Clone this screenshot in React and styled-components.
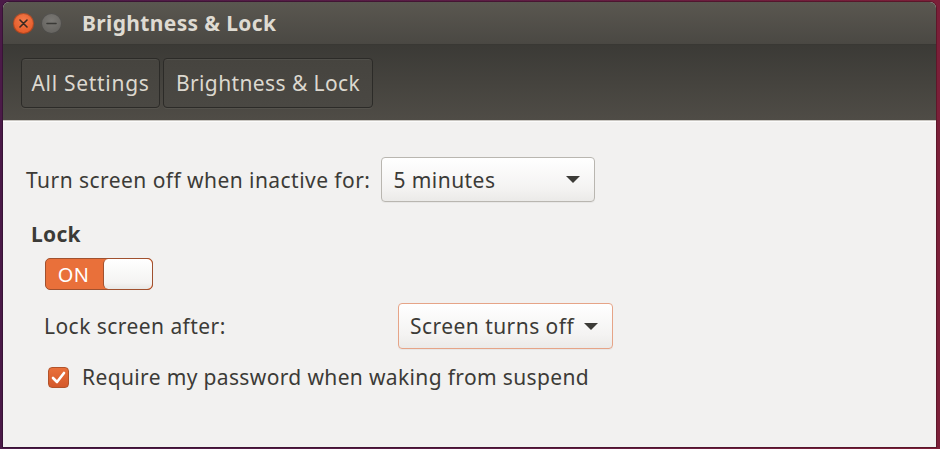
import React from "react";
import styled, { createGlobalStyle } from "styled-components";

const GlobalStyle = createGlobalStyle`
  html, body {
    margin: 0;
    padding: 0;
    width: 940px;
    height: 449px;
    overflow: hidden;
  }
  body {
    background: linear-gradient(90deg, #4b1a48 0%, #5c1d45 50%, #7c1f38 100%);
    font-family: "Noto Sans", "DejaVu Sans", sans-serif;
  }
`;

const Window = styled.div`
  margin: 2px 4px 0 3px;
  height: 445px;
  display: flex;
  flex-direction: column;
  border-radius: 6px 6px 0 0;
  overflow: hidden;
  background: #f2f1f0;
  box-shadow: 0 0 0 1px rgba(0, 0, 0, 0.25);
`;

const TitleBar = styled.div`
  height: 42px;
  flex: none;
  display: flex;
  align-items: center;
  padding-left: 10px;
  background: linear-gradient(180deg, #5a5750 0%, #4a4843 100%);
  border-bottom: 1px solid #393834;
`;

const WinButton = styled.div`
  width: 21px;
  height: 21px;
  border-radius: 50%;
  margin-right: 7px;
  display: flex;
  align-items: center;
  justify-content: center;
  background: ${(p) =>
    p.close
      ? "radial-gradient(circle at 50% 35%, #f47a4a, #e0501d)"
      : "radial-gradient(circle at 50% 35%, #7a7874, #5f5d59)"};
  box-shadow: inset 0 0 0 1px rgba(0, 0, 0, 0.25);
`;

const Title = styled.div`
  margin-left: 13px;
  color: #dfdbd2;
  font-weight: bold;
  font-size: 21px;
  letter-spacing: 0.35px;
`;

const Toolbar = styled.div`
  height: 75px;
  flex: none;
  display: flex;
  align-items: center;
  gap: 3px;
  padding-left: 18px;
  background: linear-gradient(180deg, #3b3a36 0%, #4f4c46 100%);
  border-bottom: 1px solid #c9c6c1;
`;

const Crumb = styled.div`
  width: ${(p) => p.w}px;
  height: 50px;
  box-sizing: border-box;
  display: flex;
  align-items: center;
  justify-content: center;
  color: #dcd8cf;
  font-size: 21px;
  letter-spacing: ${(p) => (p.first ? "0.7px" : "0.4px")};
  border: 1px solid #2c2b28;
  border-radius: 4px;
  background: linear-gradient(180deg, #46443f 0%, #4a4843 100%);
  box-shadow: inset 0 1px 0 rgba(255, 255, 255, 0.06), 0 1px 0 rgba(255, 255, 255, 0.05);
`;

const Content = styled.div`
  flex: 1;
  padding: 35px 0 0 23px;
  color: #3c3b37;
  font-size: 21px;
  letter-spacing: 0.45px;
  border-top: 1px solid #fbfbfa;
`;

const Row = styled.div`
  display: flex;
  align-items: center;
  gap: 11px;
`;

const Combo = styled.div`
  width: ${(p) => p.w}px;
  height: ${(p) => p.h}px;
  box-sizing: border-box;
  display: flex;
  align-items: center;
  justify-content: space-between;
  padding: 0 14px 0 11px;
  border: 1px solid ${(p) => (p.focus ? "#e6a487" : "#b9b6b0")};
  border-radius: 4px;
  background: linear-gradient(180deg, #ffffff 0%, #f4f3f2 70%, #ebeae8 100%);
  box-shadow: 0 1px 0 rgba(0, 0, 0, 0.04);
  color: #3c3b37;
  white-space: nowrap;
`;

const Arrow = styled.span`
  width: 0;
  height: 0;
  border-left: 7px solid transparent;
  border-right: 7px solid transparent;
  border-top: 7px solid #3c3b37;
`;

const Heading = styled.div`
  font-weight: bold;
  margin: 18px 0 0 5px;
  letter-spacing: 0.3px;
`;

const Switch = styled.div`
  margin: 10px 0 0 19px;
  width: 108px;
  height: 32px;
  box-sizing: border-box;
  display: flex;
  border: 1px solid #a0512f;
  border-radius: 5px;
  background: #e9703a;
  overflow: hidden;
`;

const SwitchLabel = styled.div`
  width: 55px;
  display: flex;
  align-items: center;
  justify-content: center;
  color: #fff;
  font-size: 20px;
  padding-right: 2px;
`;

const Knob = styled.div`
  flex: 1;
  border-left: 1px solid #a0512f;
  border-radius: 5px;
  background: linear-gradient(180deg, #ffffff 0%, #f4f3f2 80%, #e8e7e5 100%);
`;

const Indented = styled.div`
  margin-left: 18px;
`;

const LockRow = styled.div`
  display: grid;
  grid-template-columns: 354px auto;
  align-items: center;
  margin-top: 13px;
`;

const CheckRow = styled.div`
  display: flex;
  align-items: center;
  gap: 13px;
  margin: 14px 0 0 4px;
  letter-spacing: 0.36px;
`;

const CheckBox = styled.div`
  width: 21px;
  height: 21px;
  box-sizing: border-box;
  border-radius: 4px;
  border: 1px solid #b2532a;
  background: linear-gradient(180deg, #e9703a 0%, #d4582a 100%);
  display: flex;
  align-items: center;
  justify-content: center;
`;

export default function App() {
  return (
    <>
      <GlobalStyle />
      <Window>
        <TitleBar>
          <WinButton close>
            <svg width="9" height="9" viewBox="0 0 9 9">
              <path d="M1 1 L8 8 M8 1 L1 8" stroke="#3a2a22" strokeWidth="1.6" strokeLinecap="round" />
            </svg>
          </WinButton>
          <WinButton>
            <svg width="11" height="3" viewBox="0 0 11 3">
              <path d="M1 1.5 H10" stroke="#3a3936" strokeWidth="1.6" strokeLinecap="round" />
            </svg>
          </WinButton>
          <Title>Brightness &amp; Lock</Title>
        </TitleBar>
        <Toolbar>
          <Crumb first w={139}>All Settings</Crumb>
          <Crumb w={210}>Brightness &amp; Lock</Crumb>
        </Toolbar>
        <Content>
          <Row>
            <span>Turn screen off when inactive for:</span>
            <Combo w={214} h={45}>
              <span>5 minutes</span>
              <Arrow />
            </Combo>
          </Row>
          <Heading>Lock</Heading>
          <Switch>
            <SwitchLabel>ON</SwitchLabel>
            <Knob />
          </Switch>
          <Indented>
            <LockRow>
              <span>Lock screen after:</span>
              <Combo w={215} h={46} focus>
                <span>Screen turns off</span>
                <Arrow />
              </Combo>
            </LockRow>
            <CheckRow>
              <CheckBox>
                <svg width="15" height="13" viewBox="0 0 15 13">
                  <path d="M2 7 L6 11 L13 2" fill="none" stroke="#fff" strokeWidth="2.6" strokeLinecap="round" strokeLinejoin="round" />
                </svg>
              </CheckBox>
              <span>Require my password when waking from suspend</span>
            </CheckRow>
          </Indented>
        </Content>
      </Window>
    </>
  );
}
